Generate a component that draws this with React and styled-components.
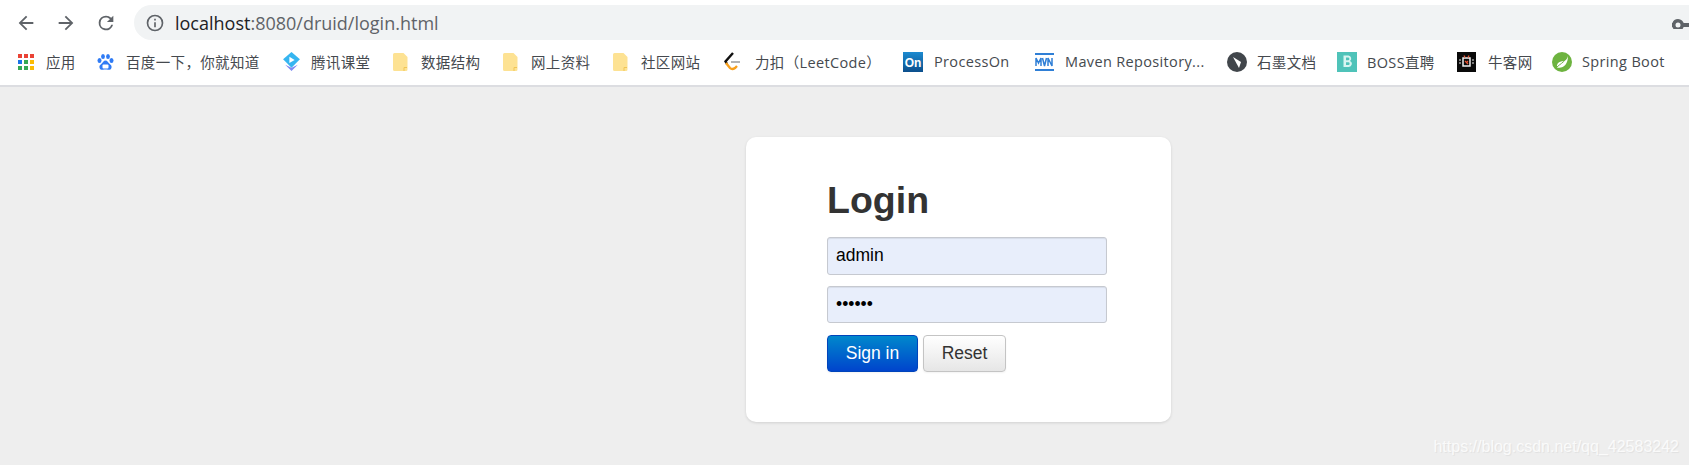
import React from 'react';
import styled, {createGlobalStyle} from 'styled-components';

const GlobalStyle = createGlobalStyle`
  html, body {
    margin: 0;
    padding: 0;
    height: 465px;
    overflow: hidden;
    background: #eeeeee;
    font-family: "Liberation Sans", Arial, sans-serif;
  }
`

const Browser = styled.div`
  background: #fff;
  height: 85px;
  border-bottom: 2px solid #dcdde1;
  display: flex;
  flex-direction: column;
`

const Toolbar = styled.div`
  display: flex;
  align-items: center;
  height: 40px;
  padding: 5px 0 0 15px;
  box-sizing: border-box;
`

const NavGroup = styled.div`
  display: flex;
  gap: 18px;
  width: 119px;
  flex-shrink: 0;
`

const NavButton = styled.div`
  width: 22px;
  height: 22px;
  color: #5f6368;
`

const AddressBar = styled.div`
  flex: 1;
  height: 35px;
  background: #f1f3f4;
  border-radius: 18px 0 0 18px;
  display: flex;
  align-items: center;
  padding-left: 11px;
  overflow: hidden;
`

const InfoIcon = styled.div`
  width: 20px;
  height: 20px;
  margin-right: 10px;
  flex-shrink: 0;
`

const Url = styled.div`
  flex: 1;
  font-family: "Open Sans", "Noto Sans", sans-serif;
  font-size: 18px;
  color: #5f6368;
  white-space: nowrap;
`

const Host = styled.span`
  color: #202124;
`

const KeyIcon = styled.div`
  width: 17px;
  height: 12px;
  overflow: hidden;
  flex-shrink: 0;
`

const BookmarkBar = styled.div`
  display: flex;
  align-items: center;
  height: 45px;
  padding: 0 0 2px 18px;
  box-sizing: border-box;
`

const Bookmark = styled.div`
  width: ${p => p.$width}px;
  flex-shrink: 0;
  display: flex;
  align-items: center;
`

const Favicon = styled.div`
  width: ${p => p.$slot}px;
  height: 20px;
  flex-shrink: 0;
  display: flex;
  align-items: center;
`

const Label = styled.span`
  font-family: "Open Sans", "Noto Sans CJK SC", sans-serif;
  font-size: 14.5px;
  letter-spacing: 0.35px;
  color: #45494e;
  white-space: nowrap;
`

const Page = styled.div`
  position: relative;
  height: 378px;
  padding: 50px 0 0 746px;
  box-sizing: border-box;
`

const Card = styled.form`
  width: 425px;
  height: 285px;
  background: #fff;
  border-radius: 10px;
  box-shadow: 0 1px 3px rgba(0, 0, 0, 0.12);
  padding: 43px 0 0 81px;
  box-sizing: border-box;
`

const Title = styled.h2`
  margin: 0 0 17px;
  font-size: 37.5px;
  line-height: 40px;
  font-weight: bold;
  color: #333;
`

const Field = styled.input`
  display: block;
  width: 280px;
  height: 37.5px;
  margin: 0 0 11px;
  padding: 0 8px;
  box-sizing: border-box;
  background: #e8eefb;
  border: 1px solid #c6c9d0;
  border-radius: 3px;
  box-shadow: inset 0 1px 1px rgba(0, 0, 0, 0.075);
  font-family: "Liberation Sans", Arial, sans-serif;
  font-size: 17.5px;
  color: #000;
  outline: none;
`

const ButtonRow = styled.div`
  display: flex;
  gap: 5px;
  margin-top: 12px;
`

const Button = styled.button`
  width: ${p => p.$width}px;
  height: 37px;
  padding: 0;
  border-radius: 4px;
  font-family: "Liberation Sans", Arial, sans-serif;
  font-size: 17.5px;
  color: ${p => p.$primary ? '#fff' : '#333'};
  border: 1px solid ${p => p.$primary ? '#0044bb' : '#c4c4c4'};
  background: ${p => p.$primary
    ? 'linear-gradient(to bottom, #0088cc, #0044cc)'
    : 'linear-gradient(to bottom, #ffffff, #e6e6e6)'};
  box-shadow: 0 1px 2px rgba(0, 0, 0, 0.05);
`

const Watermark = styled.div`
  position: absolute;
  right: 10px;
  bottom: 9px;
  font-size: 16px;
  color: rgba(255, 255, 255, 0.8);
  text-shadow: 1px 1px 1px rgba(0, 0, 0, 0.06);
`

const NavIcon = ({d}) => (
  <NavButton>
    <svg width="22" height="22" viewBox="0 0 24 24" fill="currentColor"><path d={d} /></svg>
  </NavButton>
);

const AppsIcon = () => {
  const colors = ['#ea4335', '#ea4335', '#ea4335', '#1a73e8', '#34a853', '#fbbc04', '#34a853', '#34a853', '#fbbc04'];
  return (
    <svg width="16" height="16" viewBox="0 0 16 16">
      {colors.map((c, i) => (
        <rect key={i} x={(i % 3) * 6} y={Math.floor(i / 3) * 6} width="4" height="4" fill={c} />
      ))}
    </svg>
  );
};

const BaiduIcon = () => (
  <svg width="17" height="18" viewBox="0 0 17 18" fill="#2f7bf5">
    <ellipse cx="2.5" cy="7.5" rx="2" ry="2.6" />
    <ellipse cx="6" cy="3.5" rx="1.9" ry="2.6" />
    <ellipse cx="11" cy="3.5" rx="1.9" ry="2.6" />
    <ellipse cx="14.5" cy="7.5" rx="2" ry="2.6" />
    <path d="M8.5 7.5c-2 0-2.6 2-4 3.2-1.6 1.2-2.4 2.4-2 4 .4 1.800 2 2.300 3.500 2.100 1-.1 1.700-.3 2.500-.3s1.500.2 2.500.3c1.500.2 3.100-.3 3.500-2.100.4-1.600-.4-2.800-2-4-1.400-1.200-2-3.200-4-3.200z" />
    <rect x="5.500" y="11.500" width="6" height="4" rx="1" fill="#fff" />
  </svg>
);

const TencentIcon = () => (
  <svg width="19" height="20" viewBox="0 0 18 19">
    <path d="M9 0l8 7-8 8-8-8z" fill="#36b5f0" />
    <path d="M3 12l6 6 6-6-6 3z" fill="#7f8cf3" />
    <path d="M7 4.500l5 3-5 3z" fill="#fff" />
  </svg>
);

const FolderIcon = () => (
  <svg width="15" height="18" viewBox="0 0 15 18">
    <path d="M1.500 0h9l4 4v12.500a1.500 1.500 0 0 1-1.500 1.500h-11.500a1.500 1.500 0 0 1-1.500-1.500v-15a1.500 1.500 0 0 1 1.500-1.500z" fill="#fde293" />
    <path d="M11 18v-3.500h3" stroke="#f0c557" strokeWidth="1" fill="none" />
  </svg>
);

const LeetIcon = () => (
  <svg width="18" height="20" viewBox="0 0 18 20" fill="none">
    <path d="M10 1L2.500 9.500l1.500 2.500" stroke="#111" strokeWidth="2.400" />
    <path d="M3 11l4 5c1.500 1.500 3 1.500 5 0l2-2" stroke="#f89f1b" strokeWidth="2.400" />
    <path d="M8 10h9" stroke="#b3b3b3" strokeWidth="2" />
  </svg>
);

const ProcessOnIcon = () => (
  <svg width="20" height="20" viewBox="0 0 20 20">
    <defs>
      <linearGradient id="po" x1="0" y1="0" x2="0" y2="1">
        <stop offset="0" stopColor="#1c8ad0" />
        <stop offset="1" stopColor="#0c4f8c" />
      </linearGradient>
    </defs>
    <rect width="20" height="20" fill="url(#po)" />
    <text x="10" y="14.500" textAnchor="middle" fontFamily="Liberation Sans" fontWeight="bold" fontSize="12" fill="#fff">On</text>
  </svg>
);

const MavenIcon = () => (
  <svg width="19" height="18" viewBox="0 0 19 18">
    <rect y="0" width="19" height="2" fill="#2f7fd6" />
    <rect y="16" width="19" height="2" fill="#2f7fd6" />
    <path d="M1 13V5l2.500 5L6 5v8M7.500 5l2 8 2-8M13 13V5l4 8V5" stroke="#2f7fd6" strokeWidth="1.500" fill="none" />
  </svg>
);

const ShimoIcon = () => (
  <svg width="20" height="20" viewBox="0 0 20 20">
    <circle cx="10" cy="10" r="10" fill="#41464b" />
    <path d="M6 5l8 5-2 6z" fill="#fff" />
  </svg>
);

const BossIcon = () => (
  <svg width="20" height="20" viewBox="0 0 20 20">
    <rect width="20" height="20" fill="#4fc3b9" />
    <path d="M6.500 3.500h5a3 3 0 0 1 1.500 5.400 3.200 3.200 0 0 1-1.500 6.100h-5zM9 5.500v2.800h2a1.400 1.400 0 0 0 0-2.800zM9 10.300v2.700h2.300a1.350 1.350 0 0 0 0-2.700z" fill="#d8f5f1" fillRule="evenodd" />
  </svg>
);

const NowcoderIcon = () => (
  <svg width="19" height="20" viewBox="0 0 19 20">
    <rect width="19" height="20" fill="#0a0a0a" />
    <path d="M6 6h7v8H6z" stroke="#eee" strokeWidth="1.500" fill="none" />
    <path d="M2 8h2M2 11h2M15 8h2M15 11h2" stroke="#e8e8e8" strokeWidth="1.200" />
    <path d="M8 9l3 3M11 9l-1 1M7 3.500l1 2M12 3.500l-1 2" stroke="#e8502f" strokeWidth="1.300" />
  </svg>
);

const SpringIcon = () => (
  <svg width="20" height="20" viewBox="0 0 20 20">
    <circle cx="10" cy="10" r="10" fill="#6db33f" />
    <path d="M16 4c-1 4-3 5-7 5.500-3 .5-4.500 2.500-4 6 6 1.500 11-3 11-11.500z" fill="#fff" />
    <path d="M5 15c3-3 6-4 9-8" stroke="#6db33f" strokeWidth="1" fill="none" />
  </svg>
);

const bookmarks = [
  {text: '应用', icon: <AppsIcon />, width: 79, slot: 28},
  {text: '百度一下，你就知道', icon: <BaiduIcon />, width: 185, slot: 29},
  {text: '腾讯课堂', icon: <TencentIcon />, width: 111, slot: 29},
  {text: '数据结构', icon: <FolderIcon />, width: 110, slot: 28},
  {text: '网上资料', icon: <FolderIcon />, width: 110, slot: 28},
  {text: '社区网站', icon: <FolderIcon />, width: 110, slot: 28},
  {text: '力扣（LeetCode）', icon: <LeetIcon />, width: 180, slot: 32},
  {text: 'ProcessOn', icon: <ProcessOnIcon />, width: 132, slot: 31},
  {text: 'Maven Repository...', icon: <MavenIcon />, width: 192, slot: 30},
  {text: '石墨文档', icon: <ShimoIcon />, width: 110, slot: 30},
  {text: 'BOSS直聘', icon: <BossIcon />, width: 120, slot: 30},
  {text: '牛客网', icon: <NowcoderIcon />, width: 95, slot: 31},
  {text: 'Spring Boot', icon: <SpringIcon />, width: 130, slot: 30},
];

export default function App() {
  return (
    <>
      <GlobalStyle />
      <Browser>
        <Toolbar>
          <NavGroup>
            <NavIcon d="M20 11H7.830l5.590-5.590L12 4l-8 8 8 8 1.410-1.410L7.830 13H20z" />
            <NavIcon d="M4 11h12.170l-5.590-5.590L12 4l8 8-8 8-1.410-1.410L16.170 13H4z" />
            <NavIcon d="M17.650 6.350A7.960 7.960 0 0 0 12 4a8 8 0 1 0 7.740 10h-2.080A6 6 0 1 1 12 6c1.660 0 3.140.69 4.220 1.780L13 11h7V4z" />
          </NavGroup>
          <AddressBar>
            <InfoIcon>
              <svg width="20" height="20" viewBox="0 0 24 24" fill="#5f6368">
                <path d="M11 7h2v2h-2zm0 4h2v6h-2zm1-9a10 10 0 1 0 0 20 10 10 0 0 0 0-20zm0 18a8 8 0 1 1 0-16 8 8 0 0 1 0 16z" />
              </svg>
            </InfoIcon>
            <Url><Host>localhost</Host>:8080/druid/login.html</Url>
            <KeyIcon>
              <svg width="24" height="12" viewBox="0 0 24 12" fill="#5f6368">
                <path d="M6 0a6 6 0 1 1-5.650 8H0V4h.350A6 6 0 0 1 6 0zm0 3.500a2.500 2.500 0 1 0 0 5 2.500 2.500 0 0 0 0-5zM11 4h13v4h-2v2h-4V8h-7z" />
              </svg>
            </KeyIcon>
          </AddressBar>
        </Toolbar>
        <BookmarkBar>
          {bookmarks.map(b => (
            <Bookmark key={b.text} $width={b.width}>
              <Favicon $slot={b.slot}>{b.icon}</Favicon>
              <Label>{b.text}</Label>
            </Bookmark>
          ))}
        </BookmarkBar>
      </Browser>
      <Page>
        <Card onSubmit={e => e.preventDefault()}>
          <Title>Login</Title>
          <Field type="text" defaultValue="admin" />
          <Field type="password" defaultValue="123456" />
          <ButtonRow>
            <Button type="submit" $primary $width={91}>Sign in</Button>
            <Button type="reset" $width={83}>Reset</Button>
          </ButtonRow>
        </Card>
        <Watermark>https://blog.csdn.net/qq_42583242</Watermark>
      </Page>
    </>
  );
}
